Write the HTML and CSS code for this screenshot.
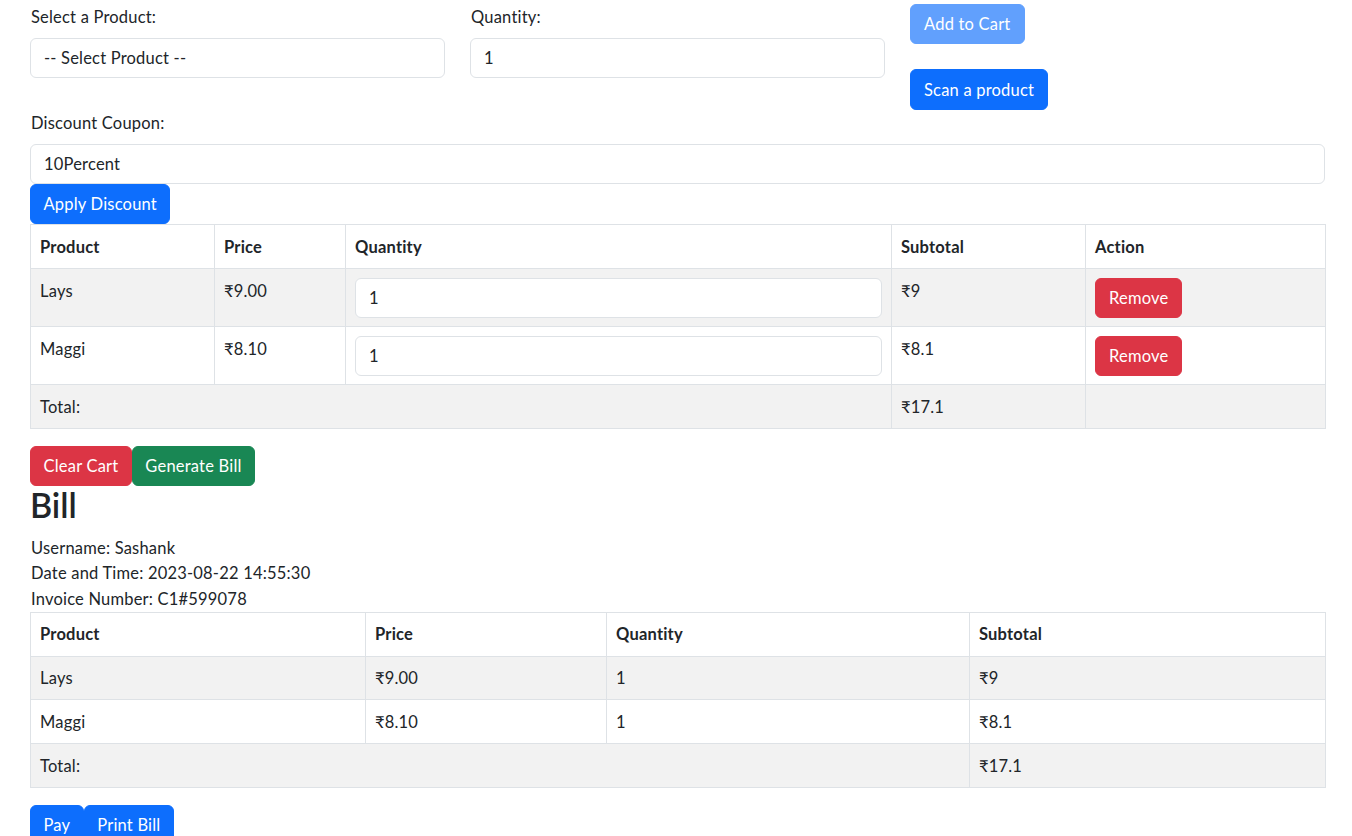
FILE: index.html
```html
<!DOCTYPE html>
<html lang="en">
<head>
<meta charset="utf-8">
<title>Cart</title>
<link rel="stylesheet" href="styles.css">
</head>
<body>
<div class="page">
  <div class="top-row">
    <div class="field-col">
      <label class="label">Select a Product:</label>
      <select class="field select"><option>-- Select Product --</option></select>
    </div>
    <div class="field-col">
      <label class="label">Quantity:</label>
      <input class="field" type="text" value="1">
    </div>
    <div class="btn-col">
      <button class="btn btn-blue is-disabled">Add to Cart</button>
      <button class="btn btn-blue">Scan a product</button>
    </div>
  </div>

  <div class="coupon">
    <label class="label">Discount Coupon:</label>
    <input class="field" type="text" value="10Percent">
    <div class="btn-line"><button class="btn btn-blue">Apply Discount</button></div>
  </div>

  <table class="tbl cart">
    <colgroup>
      <col class="c-prod"><col class="c-price"><col class="c-qty"><col class="c-sub"><col class="c-act">
    </colgroup>
    <thead>
      <tr><th>Product</th><th>Price</th><th>Quantity</th><th>Subtotal</th><th>Action</th></tr>
    </thead>
    <tbody>
      <tr class="striped">
        <td>Lays</td><td>₹9.00</td>
        <td><input class="field qty" type="text" value="1"></td>
        <td>₹9</td>
        <td><button class="btn btn-red">Remove</button></td>
      </tr>
      <tr>
        <td>Maggi</td><td>₹8.10</td>
        <td><input class="field qty" type="text" value="1"></td>
        <td>₹8.1</td>
        <td><button class="btn btn-red">Remove</button></td>
      </tr>
      <tr class="striped">
        <td colspan="3">Total:</td><td>₹17.1</td><td></td>
      </tr>
    </tbody>
  </table>

  <div class="btn-line">
    <button class="btn btn-red">Clear Cart</button><button class="btn btn-green">Generate Bill</button>
  </div>

  <h2 class="bill-title">Bill</h2>
  <div class="bill-info">
    <div>Username: Sashank</div>
    <div>Date and Time: 2023-08-22 14:55:30</div>
    <div>Invoice Number: C1#599078</div>
  </div>

  <table class="tbl bill">
    <colgroup>
      <col class="b-prod"><col class="b-price"><col class="b-qty"><col class="b-sub">
    </colgroup>
    <thead>
      <tr><th>Product</th><th>Price</th><th>Quantity</th><th>Subtotal</th></tr>
    </thead>
    <tbody>
      <tr class="striped"><td>Lays</td><td>₹9.00</td><td>1</td><td>₹9</td></tr>
      <tr><td>Maggi</td><td>₹8.10</td><td>1</td><td>₹8.1</td></tr>
      <tr class="striped"><td colspan="3">Total:</td><td>₹17.1</td></tr>
    </tbody>
  </table>

  <div class="btn-line">
    <button class="btn btn-blue">Pay</button><button class="btn btn-blue">Print Bill</button>
  </div>
</div>
</body>
</html>
```
FILE: styles.css
```css
* { box-sizing: border-box; }
html, body {
  margin: 0;
  padding: 0;
  background: #fff;
}
body {
  font-family: Lato, "Noto Sans", "DejaVu Sans", sans-serif;
  font-size: 16.5px;
  letter-spacing: 0.2px;
  line-height: 24px;
  color: #212529;
}
.page {
  padding: 0 27px 0 30px;
}
.top-row {
  display: grid;
  grid-template-columns: 415px 415px 415px;
  column-gap: 25px;
}
.field-col {
  display: flex;
  flex-direction: column;
  padding-top: 5px;
}
.label {
  display: block;
  line-height: 24px;
  margin-bottom: 9px;
  padding-left: 1px;
}
.field {
  display: block;
  width: 100%;
  height: 40px;
  border: 1px solid #dee2e6;
  border-radius: 6px;
  padding: 0 13px;
  font-family: inherit;
  font-size: 16.5px;
  letter-spacing: 0.2px;
  color: #212529;
  background: #fff;
  outline: none;
}
.select {
  -webkit-appearance: none;
  appearance: none;
}
.btn-col {
  display: flex;
  flex-direction: column;
  align-items: flex-start;
  gap: 25px;
  padding-top: 4px;
}
.btn {
  display: inline-block;
  height: 40px;
  padding: 0 13px;
  border: 1px solid transparent;
  border-radius: 6px;
  font-family: inherit;
  font-size: 16.5px;
  letter-spacing: 0.2px;
  line-height: 24px;
  color: #fff;
  cursor: pointer;
}
.btn-line .btn { padding: 0 12.5px; }
.btn-col .btn + .btn { height: 41px; }
.btn-blue { background: #0d6efd; border-color: #0d6efd; }
.btn-red { background: #dc3545; border-color: #dc3545; }
.btn-green { background: #198754; border-color: #198754; }
.is-disabled { opacity: 0.65; }
.btn-line {
  display: flex;
}
.coupon .label {
  margin-top: 1px;
}
.tbl {
  width: 1295px;
  border-collapse: collapse;
  table-layout: fixed;
  margin-bottom: 17px;
}
.tbl th, .tbl td {
  border: 1px solid #dee2e6;
  padding: 8.5px 9px;
  line-height: 26px;
  text-align: left;
  vertical-align: top;
}
.bill th, .bill td {
  padding-top: 8.4px;
  padding-bottom: 8.4px;
}
.tbl th { font-weight: 700; }
.tbl tr.striped td { background: #f2f2f2; }
.c-prod { width: 184px; }
.c-price { width: 131px; }
.c-qty { width: 546px; }
.c-sub { width: 194px; }
.c-act { width: 240px; }
.b-prod { width: 335px; }
.b-price { width: 241px; }
.b-qty { width: 363px; }
.b-sub { width: 356px; }
.qty { width: 100%; }
.cart td .btn { vertical-align: top; }
.bill-title {
  margin: 0 0 12px 0;
  font-size: 34px;
  font-weight: 600;
  letter-spacing: 0;
  line-height: 38px;
}
.bill-info div {
  line-height: 25.3px;
  padding-left: 1px;
}
```
